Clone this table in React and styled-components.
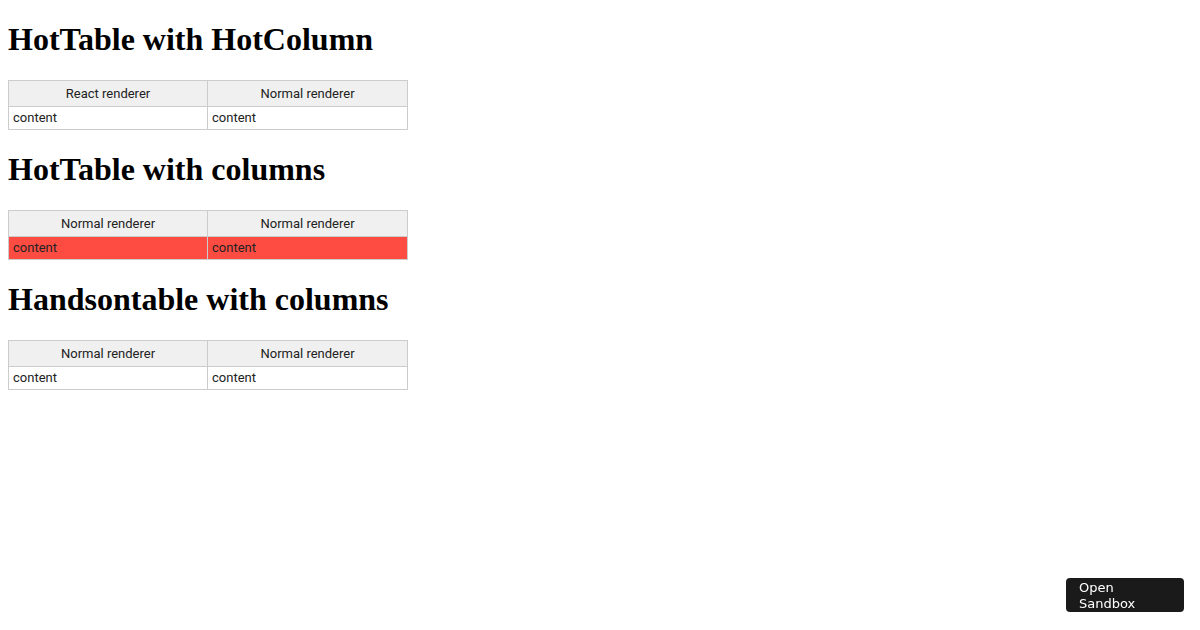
import React from "react";
import styled, { createGlobalStyle } from "styled-components";

const Global = createGlobalStyle`
  body {
    margin: 0 8px 8px;
    font-family: "Liberation Serif", serif;
    background: #fff;
  }
`;

const Heading = styled.h1`
  font-family: "Liberation Serif", serif;
  font-size: 32px;
  font-weight: bold;
  margin: 21.44px 0;
  color: #000;
`;

const Table = styled.table`
  border-collapse: separate;
  border-spacing: 0;
  width: 400px;
  table-layout: fixed;
  font-family: Roboto, "Liberation Sans", sans-serif;
  font-size: 13px;
  color: #222;
  border-top: 1px solid #ccc;
  border-left: 1px solid #ccc;
`;

const Th = styled.th`
  padding: 0 4px;
  background: #f0f0f0;
  font-weight: normal;
  text-align: center;
  border-right: 1px solid #ccc;
  border-bottom: 1px solid #ccc;
  box-sizing: border-box;
  height: 26px;
  line-height: 25px;
  vertical-align: middle;
`;

const Td = styled.td`
  height: 23px;
  box-sizing: border-box;
  padding: 0 4px;
  line-height: 21px;
  text-align: left;
  vertical-align: top;
  background: ${(p) => (p.$highlight ? "#ff4c42" : "#fff")};
  border-right: 1px solid #ccc;
  border-bottom: 1px solid #ccc;
  white-space: nowrap;
  overflow: hidden;
`;

const SandboxButton = styled.button`
  position: fixed;
  right: 16px;
  bottom: 18px;
  width: 118px;
  height: 34px;
  box-sizing: border-box;
  padding: 2px 30px 0 13px;
  background: #1a1a1a;
  color: #fff;
  border: none;
  border-radius: 4px;
  font-family: "DejaVu Sans", sans-serif;
  font-size: 13px;
  line-height: 16px;
  text-align: left;
  cursor: pointer;
`;

function HotGrid({ headers, highlight }) {
  return (
    <Table>
      <colgroup>
        <col style={{ width: 199 }} />
        <col style={{ width: 200 }} />
      </colgroup>
      <thead>
        <tr>
          {headers.map((h, i) => (
            <Th key={i}>{h}</Th>
          ))}
        </tr>
      </thead>
      <tbody>
        <tr>
          <Td $highlight={highlight}>content</Td>
          <Td $highlight={highlight}>content</Td>
        </tr>
      </tbody>
    </Table>
  );
}

export default function App() {
  return (
    <>
      <Global />
      <Heading>HotTable with HotColumn</Heading>
      <HotGrid headers={["React renderer", "Normal renderer"]} />
      <Heading>HotTable with columns</Heading>
      <HotGrid headers={["Normal renderer", "Normal renderer"]} highlight />
      <Heading>Handsontable with columns</Heading>
      <HotGrid headers={["Normal renderer", "Normal renderer"]} />
      <SandboxButton>Open Sandbox</SandboxButton>
    </>
  );
}
